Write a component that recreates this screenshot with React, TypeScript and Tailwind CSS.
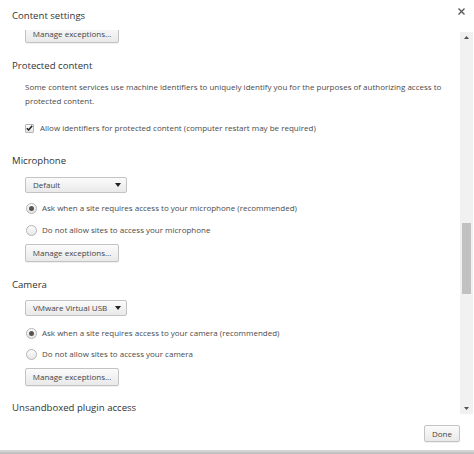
import React from "react";

function Btn({ children, className = "" }: { children: React.ReactNode; className?: string }) {
  return (
    <div
      className={`flex items-center justify-center border border-[#c3c3c3] rounded-[2px] bg-gradient-to-b from-[#fbfbfb] to-[#e9e9e9] text-[#444] shadow-[0_1px_0_rgba(0,0,0,0.06)] ${className}`}
    >
      {children}
    </div>
  );
}

function Select({ label }: { label: string }) {
  return (
    <div className="ml-[25px] w-[102px] h-[16px] flex items-center justify-between pl-[7px] pr-[5px] border border-[#c3c3c3] rounded-[2px] bg-gradient-to-b from-[#fbfbfb] to-[#e9e9e9] text-[#444]">
      <span>{label}</span>
      <svg width="6" height="4" viewBox="0 0 6 4">
        <polygon points="0,0 6,0 3,4" fill="#222" />
      </svg>
    </div>
  );
}

function Radio({ checked, label, className = "" }: { checked?: boolean; label: string; className?: string }) {
  return (
    <div className={`h-[20px] flex items-center pl-[26px] gap-[5px] ${className}`}>
      <div className="w-[11px] h-[11px] rounded-full border border-[#b5b5b5] bg-gradient-to-b from-[#fdfdfd] to-[#e6e6e6] flex items-center justify-center">
        {checked && <div className="w-[5px] h-[5px] rounded-full bg-[#555]" />}
      </div>
      <span>{label}</span>
    </div>
  );
}

function Heading({ children, className = "" }: { children: React.ReactNode; className?: string }) {
  return <div className={`h-[20px] flex items-center pl-[12px] text-[9.6px] text-[#333] ${className}`}>{children}</div>;
}

export default function App() {
  return (
    <div className="w-[474px] h-[454px] bg-white flex flex-col overflow-hidden text-[#4a4a4a] text-[8px] font-['Open_Sans',sans-serif]">
      {/* header */}
      <div className="h-[30px] shrink-0 relative flex items-center">
        <div className="pl-[12px] mt-[3px] text-[9.6px] text-[#333]">Content settings</div>
        <svg className="absolute right-[9px] top-[8px]" width="7" height="7" viewBox="0 0 7 7">
          <path d="M0.5 0.5 L6.5 6.5 M6.5 0.5 L0.5 6.5" stroke="#555" strokeWidth="1.3" />
        </svg>
      </div>

      {/* scroll region */}
      <div className="h-[386px] shrink-0 flex">
        <div className="flex-1 overflow-hidden">
          <div className="mt-[-5px] flex flex-col">
            <Btn className="ml-[25px] w-[94px] h-[18px]">Manage exceptions...</Btn>

            <Heading className="mt-[13px]">Protected content</Heading>
            <div className="mt-[4px] pl-[25px] leading-[14px]">
              Some content services use machine identifiers to uniquely identify you for the purposes of authorizing access to
              <br />
              protected content.
            </div>
            <div className="mt-[10px] h-[20px] flex items-center pl-[25px] gap-[6px]">
              <div className="w-[9px] h-[9px] border border-[#b5b5b5] rounded-[1px] bg-gradient-to-b from-[#fdfdfd] to-[#e6e6e6] flex items-center justify-center">
                <svg width="7" height="6" viewBox="0 0 7 6">
                  <path d="M0.8 3.2 L2.6 5 L6.2 0.8" stroke="#222" strokeWidth="1.5" fill="none" />
                </svg>
              </div>
              <span>Allow identifiers for protected content (computer restart may be required)</span>
            </div>

            <Heading className="mt-[13px]">Microphone</Heading>
            <div className="mt-[6px]">
              <Select label="Default" />
            </div>
            <Radio className="mt-[5px]" checked label="Ask when a site requires access to your microphone (recommended)" />
            <Radio className="mt-[2px]" label="Do not allow sites to access your microphone" />
            <Btn className="mt-[4px] ml-[25px] w-[94px] h-[18px]">Manage exceptions...</Btn>

            <Heading className="mt-[13px]">Camera</Heading>
            <div className="mt-[5px]">
              <Select label="VMware Virtual USB" />
            </div>
            <Radio className="mt-[7px]" checked label="Ask when a site requires access to your camera (recommended)" />
            <Radio className="mt-[1px]" label="Do not allow sites to access your camera" />
            <Btn className="mt-[4px] ml-[25px] w-[94px] h-[18px]">Manage exceptions...</Btn>

            <Heading className="mt-[12px]">Unsandboxed plugin access</Heading>
          </div>
        </div>
        {/* scrollbar */}
        <div className="w-[13px] mr-[1px] my-[2px] bg-[#f1f1f1] relative flex flex-col justify-between items-center py-[4px]">
          <svg width="5" height="3" viewBox="0 0 5 3">
            <polygon points="2.5,0 5,3 0,3" fill="#505050" />
          </svg>
          <svg width="5" height="3" viewBox="0 0 5 3">
            <polygon points="0,0 5,0 2.5,3" fill="#505050" />
          </svg>
          <div className="absolute left-[2px] right-[2px] top-[191px] h-[71px] bg-[#c1c1c1]" />
        </div>
      </div>

      {/* footer */}
      <div className="h-[34px] shrink-0 flex justify-end items-start pt-[9px] pr-[14px]">
        <Btn className="w-[36px] h-[17px]">Done</Btn>
      </div>
      <div className="h-[4px] shrink-0 bg-gradient-to-b from-[#dcdcdc] to-[#bcbcbc]" />
    </div>
  );
}
